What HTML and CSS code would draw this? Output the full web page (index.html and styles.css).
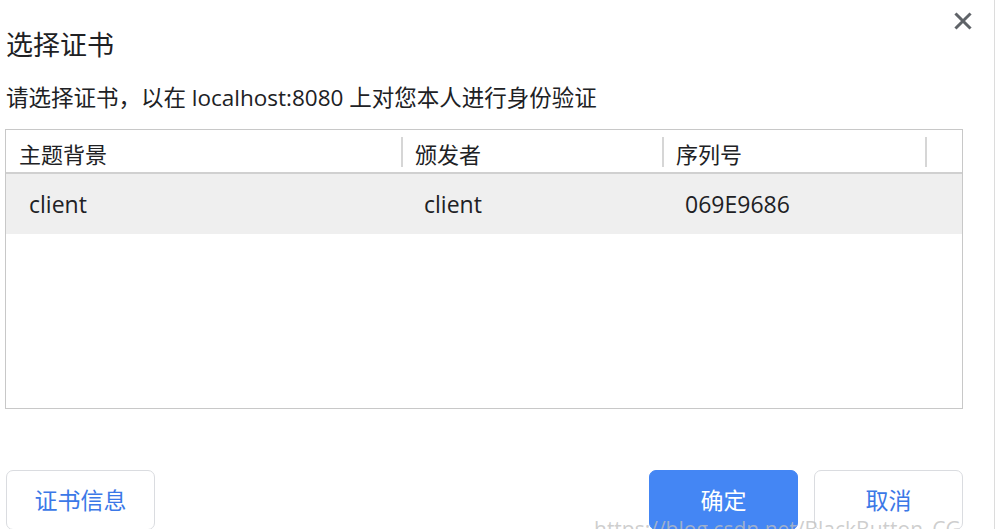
FILE: index.html
```html
<!DOCTYPE html>
<html lang="zh-CN">
<head>
<meta charset="utf-8">
<title>选择证书</title>
<link rel="stylesheet" href="styles.css">
</head>
<body>
<div class="dialog">
  <header class="top">
    <h1 class="title">选择证书</h1>
    <button class="close" aria-label="关闭">
      <svg width="20" height="20" viewBox="0 0 20 20"><path d="M3.5 3.5 L16.5 16.5 M16.5 3.5 L3.5 16.5" stroke="#5f6368" stroke-width="3" stroke-linecap="square" fill="none"/></svg>
    </button>
  </header>
  <p class="subtitle">请选择证书，以在 localhost:8080 上对您本人进行身份验证</p>
  <div class="table">
    <div class="thead">
      <div class="th first">主题背景</div>
      <div class="th">颁发者</div>
      <div class="th">序列号</div>
      <div class="th"></div>
    </div>
    <div class="row selected">
      <div class="td">client</div>
      <div class="td">client</div>
      <div class="td">069E9686</div>
      <div class="td"></div>
    </div>
  </div>
  <footer class="actions">
    <button class="btn">证书信息</button>
    <div class="right">
      <button class="btn primary">确定</button>
      <button class="btn">取消</button>
    </div>
  </footer>
  <div class="watermark">https://blog.csdn.net/BlackButton_CG</div>
</div>
</body>
</html>
```
FILE: styles.css
```css
* { box-sizing: border-box; }
html, body { margin: 0; padding: 0; background: #fff; }
body {
  font-family: "Open Sans", "Noto Sans CJK SC", sans-serif;
  color: #202124;
  overflow: hidden;
}
.dialog {
  position: relative;
  width: 995px;
  height: 529px;
  border-right: 1px solid #dcdcdc;
  padding: 0 31px 0 5px;
}
.top {
  display: flex;
  justify-content: space-between;
  align-items: flex-start;
  padding-top: 29px;
}
.title {
  margin: 0 0 0 1px;
  font-weight: normal;
  font-size: 27px;
  line-height: 32px;
}
.close {
  margin: -18px -10px 0 0;
  border: 0;
  background: none;
  padding: 0;
  width: 20px;
  height: 20px;
  display: block;
}
.subtitle {
  margin: 23px 0 0 1px;
  font-size: 22.5px;
  line-height: 28px;
}
.table {
  margin-top: 17px;
  border: 1px solid #c8c8c8;
  height: 280px;
}
.thead, .row {
  display: grid;
  grid-template-columns: 395px 261px 263px 1fr;
}
.thead {
  border-bottom: 2px solid #d0d0d0;
  height: 44px;
}
.th {
  margin-top: 7px;
  height: 30px;
  line-height: 34px;
  font-size: 22px;
  border-left: 2px solid #d6d6d6;
  padding-left: 12px;
}
.th.first { border-left: 0; padding-left: 13px; }
.row {
  height: 60px;
  align-items: center;
  font-size: 23px;
}
.row.selected { background: #efefef; }
.td { padding-left: 23px; }
.actions {
  display: flex;
  justify-content: space-between;
  margin-top: 61px;
  padding-left: 1px;
}
.right { display: flex; gap: 16px; }
.btn {
  width: 149px;
  height: 60px;
  border: 1px solid #dadce0;
  border-radius: 7px;
  background: #fff;
  color: #3b78e7;
  font-family: "Open Sans", "Noto Sans CJK SC", sans-serif;
  font-size: 23px;
  padding: 0 0 2px;
}
.btn.primary {
  background: #4486f4;
  border-color: #4486f4;
  color: #fff;
}
.watermark {
  position: absolute;
  left: 594px;
  top: 515px;
  font-size: 21px;
  color: rgba(190, 190, 190, 0.75);
  white-space: nowrap;
  font-family: "Open Sans", sans-serif;
}
```
